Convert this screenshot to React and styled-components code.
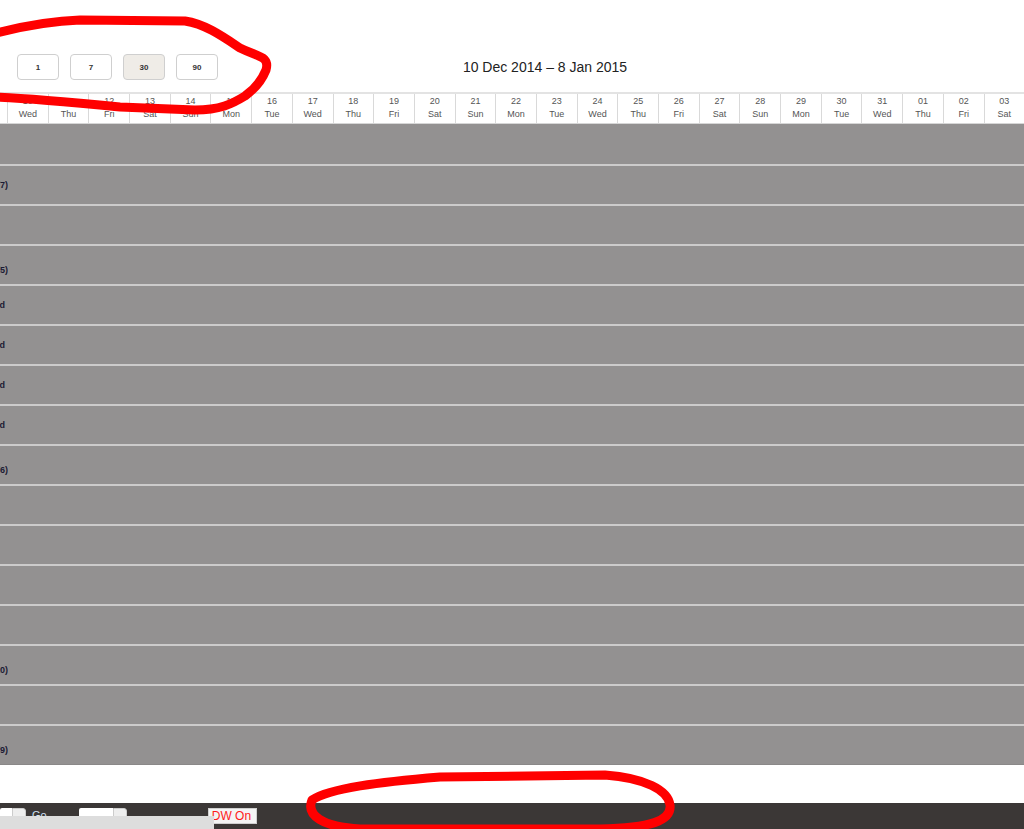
import React from 'react';
import styled, { createGlobalStyle } from 'styled-components';

const GlobalStyle = createGlobalStyle`
  html, body {
    margin: 0;
    padding: 0;
    background: #ffffff;
  }
  body {
    font-family: "Liberation Sans", Arial, sans-serif;
    overflow: hidden;
  }
`;

const Page = styled.div`
  position: relative;
  width: 1024px;
  height: 829px;
  overflow: hidden;
  display: flex;
  flex-direction: column;
`;

const Toolbar = styled.div`
  height: 92px;
  box-sizing: border-box;
  padding: 54px 164px 12px 17px;
  display: flex;
  align-items: center;
`;

const RangeGroup = styled.div`
  display: flex;
  gap: 11px;
  margin-right: 12px;
`;

const RangeButton = styled.button`
  width: 42px;
  height: 26px;
  box-sizing: border-box;
  border: 1px solid #cfcfcf;
  border-radius: 4px;
  background: ${(p) => (p.active ? '#efece7' : '#ffffff')};
  color: #333;
  font-family: "Liberation Sans", Arial, sans-serif;
  font-size: 8px;
  font-weight: bold;
  padding: 0;
  cursor: pointer;
`;

const Title = styled.div`
  flex: 1;
  text-align: center;
  font-size: 14px;
  color: #222;
`;

const Header = styled.div`
  display: flex;
  border-top: 2px solid #e3e3e3;
  border-bottom: 1px solid #d6d6d6;
  height: 32px;
  box-sizing: border-box;
  overflow: hidden;
  background: #fff;
`;

const Corner = styled.div`
  flex: 0 0 8px;
  box-sizing: border-box;
  border-right: 1px solid #d9d9d9;
`;

const DayCell = styled.div`
  flex: 0 0 40.7px;
  box-sizing: border-box;
  border-right: 1px solid #d9d9d9;
  text-align: center;
  font-size: 9px;
  line-height: 13px;
  color: #555;
  padding-top: 1px;
`;

const Grid = styled.div`
  display: flex;
  flex-direction: column;
  border-bottom: 1px solid #8a8888;
`;

const Row = styled.div`
  display: flex;
  height: 40px;
  box-sizing: border-box;
  background: #939191;
  border-top: ${(p) => (p.first ? 'none' : '2px solid #cccbcb')};
`;

const RowLabel = styled.div`
  flex: 0 0 8px;
  display: flex;
  justify-content: flex-end;
  align-items: center;
  overflow: hidden;
`;

const LabelText = styled.div`
  flex: 0 0 auto;
  white-space: pre;
  font-size: 9px;
  line-height: 11px;
  font-weight: bold;
  color: #1c1b34;
  text-align: left;
  padding-right: ${(p) => (p.tail ? 3 : 0)}px;
`;

const Spacer = styled.div`
  flex: 1;
`;

const BottomBar = styled.div`
  position: relative;
  height: 26px;
  background: #3b3736;
  display: flex;
  align-items: flex-start;
  padding-top: 5px;
  box-sizing: border-box;
  overflow: hidden;
`;

const Spin = styled.div`
  display: flex;
  margin-left: ${(p) => p.offset}px;
`;

const SpinInput = styled.div`
  width: ${(p) => p.w}px;
  height: 16px;
  background: #fff;
  border-radius: 2px 0 0 0;
`;

const SpinArrow = styled.div`
  width: 14px;
  height: 16px;
  box-sizing: border-box;
  background: #eee;
  border: 1px solid #ccc;
  border-radius: 0 3px 0 0;
`;

const BarLabel = styled.span`
  margin-left: 6px;
  font-size: 11px;
  line-height: 14px;
  color: #cfe0f3;
`;

const DwButton = styled.button`
  margin-left: 81px;
  height: 16px;
  padding: 0 5px 0 3px;
  border: 1px solid #cfcfcf;
  background: #f4f4f4;
  color: #ff1a1a;
  font-family: "Liberation Sans", Arial, sans-serif;
  font-size: 12px;
  line-height: 14px;
`;

const ScrollStrip = styled.div`
  position: absolute;
  left: 0;
  bottom: 0;
  width: 214px;
  height: 13px;
  background: #dddddd;
`;

const Marks = styled.svg`
  position: absolute;
  left: 0;
  top: 0;
  pointer-events: none;
`;

const ranges = [1, 7, 30, 90];
const dayNames = ['Sun', 'Mon', 'Tue', 'Wed', 'Thu', 'Fri', 'Sat'];

const days = [];
for (let i = 0; i < 25; i++) {
  const d = new Date(2014, 11, 10 + i);
  days.push({ num: String(d.getDate()).padStart(2, '0'), name: dayNames[d.getDay()] });
}

// labels of the resource column, which is scrolled out to the left
const rooms = [
  { text: '' },
  { text: 'Double (4/7)' },
  { text: '' },
  { text: 'Twin room\nDorm A (2/5)' },
  { text: 'Booked', tail: true },
  { text: 'Booked', tail: true },
  { text: 'Booked', tail: true },
  { text: 'Booked', tail: true },
  { text: 'Mixed\nDorm B (3/6)' },
  { text: '' },
  { text: '' },
  { text: '' },
  { text: '' },
  { text: 'Family\nSuite (1/10)' },
  { text: '' },
  { text: 'Female\nDorm C (2/9)' },
];

export default function App() {
  return (
    <Page>
      <GlobalStyle />
      <Toolbar>
        <RangeGroup>
          {ranges.map((r) => (
            <RangeButton key={r} active={r === 30}>{r}</RangeButton>
          ))}
        </RangeGroup>
        <Title>10 Dec 2014 – 8 Jan 2015</Title>
      </Toolbar>

      <Header>
        <Corner />
        {days.map((d, i) => (
          <DayCell key={i}>
            <div>{d.num}</div>
            <div>{d.name}</div>
          </DayCell>
        ))}
      </Header>

      <Grid>
        {rooms.map((room, i) => (
          <Row key={i} first={i === 0}>
            <RowLabel>
              <LabelText tail={room.tail}>{room.text}</LabelText>
            </RowLabel>
          </Row>
        ))}
      </Grid>

      <Spacer />

      <BottomBar>
        <Spin offset={0}>
          <SpinInput w={12} />
          <SpinArrow />
        </Spin>
        <BarLabel>Go..</BarLabel>
        <Spin offset={26}>
          <SpinInput w={34} />
          <SpinArrow />
        </Spin>
        <DwButton>DW On</DwButton>
        <ScrollStrip />
      </BottomBar>

      <Marks width="1024" height="829" viewBox="0 0 1024 829">
        <path
          d="M -4 33 C 20 27, 50 21, 80 20 L 185 21 C 205 24, 222 36, 240 48 C 258 57, 270 56, 266 70 C 262 80, 256 88, 245 96 C 232 104, 220 110, 195 110 L 120 107 C 70 102, 30 98, -4 97"
          fill="none"
          stroke="#ff0000"
          strokeWidth="9"
          strokeLinecap="round"
          strokeLinejoin="round"
        />
        <path
          d="M 312 800 C 330 788, 380 782, 440 777 L 605 775 C 645 778, 668 790, 670 805 C 672 821, 650 828, 600 829 L 360 829 C 322 827, 306 815, 312 800 Z"
          fill="none"
          stroke="#ff0000"
          strokeWidth="9"
          strokeLinecap="round"
          strokeLinejoin="round"
        />
      </Marks>
    </Page>
  );
}
